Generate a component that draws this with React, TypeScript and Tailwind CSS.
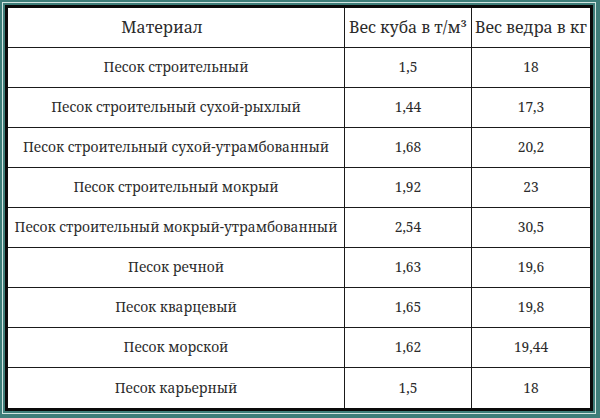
import React from "react";

const rows: [string, string, string][] = [
  ["Песок строительный", "1,5", "18"],
  ["Песок строительный сухой-рыхлый", "1,44", "17,3"],
  ["Песок строительный сухой-утрамбованный", "1,68", "20,2"],
  ["Песок строительный мокрый", "1,92", "23"],
  ["Песок строительный мокрый-утрамбованный", "2,54", "30,5"],
  ["Песок речной", "1,63", "19,6"],
  ["Песок кварцевый", "1,65", "19,8"],
  ["Песок морской", "1,62", "19,44"],
  ["Песок карьерный", "1,5", "18"],
];

export default function App() {
  return (
    <div className="w-[600px] h-[418px] bg-[#3e7d79] pt-[2px] pl-[2px] text-[#2b2b2b] font-['Noto_Serif','Liberation_Serif',serif]">
      <div className="w-[594px] h-[412px] border border-[#d3e6e2] p-[2px]">
        <div className="w-[588px] h-[406px] border-[3px] border-[#0a0a0a] bg-white flex flex-col">
          <div className="flex h-[40px] border-b border-[#1a1a1a] text-[16px]">
            <div className="w-[337px] border-r border-[#1a1a1a] flex items-center justify-center pb-[2px] pr-[28px]">
              Материал
            </div>
            <div className="w-[127px] border-r border-[#1a1a1a] flex items-center justify-center pb-[2px] whitespace-nowrap">
              Вес куба в т/м³
            </div>
            <div className="flex-1 flex items-center justify-center pb-[2px] whitespace-nowrap">
              Вес ведра в кг
            </div>
          </div>
          {rows.map((r, i) => (
            <div
              key={i}
              className={
                "flex h-[40px] text-[13.75px] " +
                (i < rows.length - 1 ? "border-b border-[#1a1a1a]" : "")
              }
            >
              <div className="w-[337px] border-r border-[#1a1a1a] flex items-center justify-center whitespace-nowrap">
                {r[0]}
              </div>
              <div className="w-[127px] border-r border-[#1a1a1a] flex items-center justify-center">
                {r[1]}
              </div>
              <div className="flex-1 flex items-center justify-center">{r[2]}</div>
            </div>
          ))}
        </div>
      </div>
    </div>
  );
}
